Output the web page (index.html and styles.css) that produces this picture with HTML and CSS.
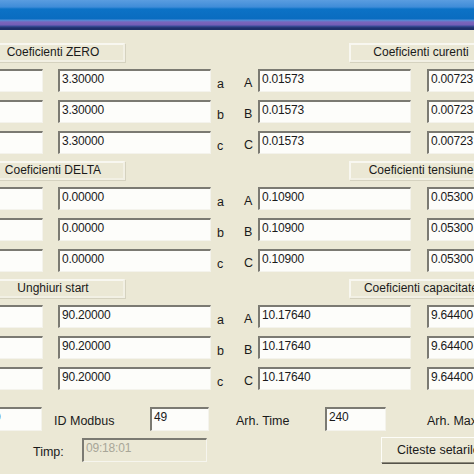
FILE: index.html
```html
<!DOCTYPE html>
<html lang="ro">
<head>
  <meta charset="UTF-8" />
  <title>Setari</title>
  <link rel="stylesheet" href="styles.css">
</head>
<body>
  <div class="titlebar"></div>

  <div class="panel">
    <div class="group">
      <div class="heads">
        <div class="head head-left">Coeficienti ZERO</div>
        <div class="head head-right">Coeficienti curenti</div>
      </div>
      <div class="rows">
        <div class="row">
          <div class="field w100"></div>
          <div class="field w153 gap15">3.30000</div>
          <span class="lbl-low">a</span>
          <span class="lbl-up">A</span>
          <div class="field w153">0.01573</div>
          <div class="field w153 gap16">0.00723</div>
        </div>
        <div class="row">
          <div class="field w100"></div>
          <div class="field w153 gap15">3.30000</div>
          <span class="lbl-low">b</span>
          <span class="lbl-up">B</span>
          <div class="field w153">0.01573</div>
          <div class="field w153 gap16">0.00723</div>
        </div>
        <div class="row">
          <div class="field w100"></div>
          <div class="field w153 gap15">3.30000</div>
          <span class="lbl-low">c</span>
          <span class="lbl-up">C</span>
          <div class="field w153">0.01573</div>
          <div class="field w153 gap16">0.00723</div>
        </div>
      </div>
    </div>

    <div class="group">
      <div class="heads">
        <div class="head head-left">Coeficienti DELTA</div>
        <div class="head head-right">Coeficienti tensiune</div>
      </div>
      <div class="rows">
        <div class="row">
          <div class="field w100"></div>
          <div class="field w153 gap15">0.00000</div>
          <span class="lbl-low">a</span>
          <span class="lbl-up">A</span>
          <div class="field w153">0.10900</div>
          <div class="field w153 gap16">0.05300</div>
        </div>
        <div class="row">
          <div class="field w100"></div>
          <div class="field w153 gap15">0.00000</div>
          <span class="lbl-low">b</span>
          <span class="lbl-up">B</span>
          <div class="field w153">0.10900</div>
          <div class="field w153 gap16">0.05300</div>
        </div>
        <div class="row">
          <div class="field w100"></div>
          <div class="field w153 gap15">0.00000</div>
          <span class="lbl-low">c</span>
          <span class="lbl-up">C</span>
          <div class="field w153">0.10900</div>
          <div class="field w153 gap16">0.05300</div>
        </div>
      </div>
    </div>

    <div class="group">
      <div class="heads">
        <div class="head head-left">Unghiuri start</div>
        <div class="head head-right">Coeficienti capacitate</div>
      </div>
      <div class="rows">
        <div class="row">
          <div class="field w100"></div>
          <div class="field w153 gap15">90.20000</div>
          <span class="lbl-low">a</span>
          <span class="lbl-up">A</span>
          <div class="field w153">10.17640</div>
          <div class="field w153 gap16">9.64400</div>
        </div>
        <div class="row">
          <div class="field w100"></div>
          <div class="field w153 gap15">90.20000</div>
          <span class="lbl-low">b</span>
          <span class="lbl-up">B</span>
          <div class="field w153">10.17640</div>
          <div class="field w153 gap16">9.64400</div>
        </div>
        <div class="row">
          <div class="field w100"></div>
          <div class="field w153 gap15">90.20000</div>
          <span class="lbl-low">c</span>
          <span class="lbl-up">C</span>
          <div class="field w153">10.17640</div>
          <div class="field w153 gap16">9.64400</div>
        </div>
      </div>
    </div>

    <div class="bottom">
      <div class="brow">
        <div class="field tall first-box">0</div>
        <span class="blabel modbus">ID Modbus</span>
        <div class="field tall w59">49</div>
        <span class="blabel arh-time">Arh. Time</span>
        <div class="field tall w61">240</div>
        <span class="blabel arh-max">Arh. Max</span>
      </div>
      <div class="brow">
        <span class="blabel timp">Timp:</span>
        <div class="field tall disabled">09:18:01</div>
        <button class="btn">Citeste setarile</button>
      </div>
    </div>
  </div>
</body>
</html>
```

FILE: styles.css
```css
:root {
  --bg: #ebe8d5;
  --field: #fdfdfa;
  --dark: #7b7a72;
  --light: #f8f7f0;
}

body {
  margin: 0;
  background: var(--bg);
  font-family: 'Liberation Sans', Arial, sans-serif;
  font-size: 12px;
  color: #1a1a1a;
  overflow: hidden;
  height: 474px;
}

.titlebar {
  height: 30px;
  background: linear-gradient(to bottom,
    #5a9de0 0px, #3f8cd8 7px, #0c72c6 9px, #0a6cc0 19px,
    #4d8fd8 20px, #7a66bc 22px, #735db6 25px,
    #3b4f9c 26px, #1d2f6a 28px, #1d2f6a 30px);
}

.panel {
  margin-left: -57px;
  width: 720px;
  padding-top: 13px;
}

.group {
  margin-bottom: 7px;
}

.heads {
  display: flex;
  height: 19px;
}

.head {
  width: 144px;
  height: 19px;
  box-sizing: border-box;
  border: 2px solid var(--light);
  border-right-color: #f2f0e4;
  border-bottom-color: #f2f0e4;
  box-shadow: 1px 1px 0 #d5d2bf;
  text-align: center;
  line-height: 15px;
  white-space: nowrap;
}

.head-left {
  margin-left: 38px;
}

.head-right {
  margin-left: 224px;
}

.rows {
  display: grid;
  row-gap: 8px;
  margin-top: 7px;
}

.row {
  display: flex;
  height: 23px;
}

.field {
  height: 23px;
  box-sizing: border-box;
  background: var(--field);
  border-top: 2px solid var(--dark);
  border-left: 2px solid var(--dark);
  border-right: 1px solid #f4f3ec;
  border-bottom: 1px solid #f4f3ec;
  padding: 1px 0 0 2px;
  line-height: 15px;
  letter-spacing: -0.2px;
  white-space: nowrap;
  overflow: hidden;
}

.w100 { width: 100px; }
.w153 { width: 153px; }
.w59 { width: 59px; }
.w61 { width: 61px; }

.gap15 { margin-left: 15px; }
.gap16 { margin-left: 16px; }

.lbl-low {
  width: 33px;
  box-sizing: border-box;
  padding-left: 6px;
  align-self: flex-end;
  line-height: 16px;
  font-size: 12.5px;
}

.lbl-up {
  width: 14px;
  align-self: flex-end;
  line-height: 17px;
  font-size: 12.5px;
}

.bottom {
  margin-top: 17px;
}

.brow {
  display: flex;
  align-items: center;
  margin-bottom: 6px;
}

.field.tall {
  height: 24px;
}

.first-box {
  width: 50px;
  margin-left: 49px;
  padding-left: 0;
}

.blabel {
  white-space: nowrap;
  font-size: 12.5px;
  padding-top: 3px;
}

.modbus {
  margin-left: 12px;
  width: 96px;
}

.arh-time {
  margin-left: 27px;
  width: 89px;
}

.arh-max {
  margin-left: 41px;
}

.timp {
  margin-left: 90px;
  width: 49px;
}

.field.disabled {
  width: 125px;
  background: var(--bg);
  color: #a8a698;
  border-right-color: #f6f5ee;
  border-bottom-color: #f6f5ee;
}

.btn {
  margin-left: 174px;
  width: 120px;
  height: 26px;
  box-sizing: border-box;
  background: var(--bg);
  font-family: inherit;
  font-size: 12.5px;
  color: #1a1a1a;
  text-align: left;
  padding: 0 0 0 15px;
  border: 1px solid;
  border-color: #fdfdf8 #8d8a7c #8d8a7c #fdfdf8;
  box-shadow: 1px 1px 0 #55534a;
}
```
